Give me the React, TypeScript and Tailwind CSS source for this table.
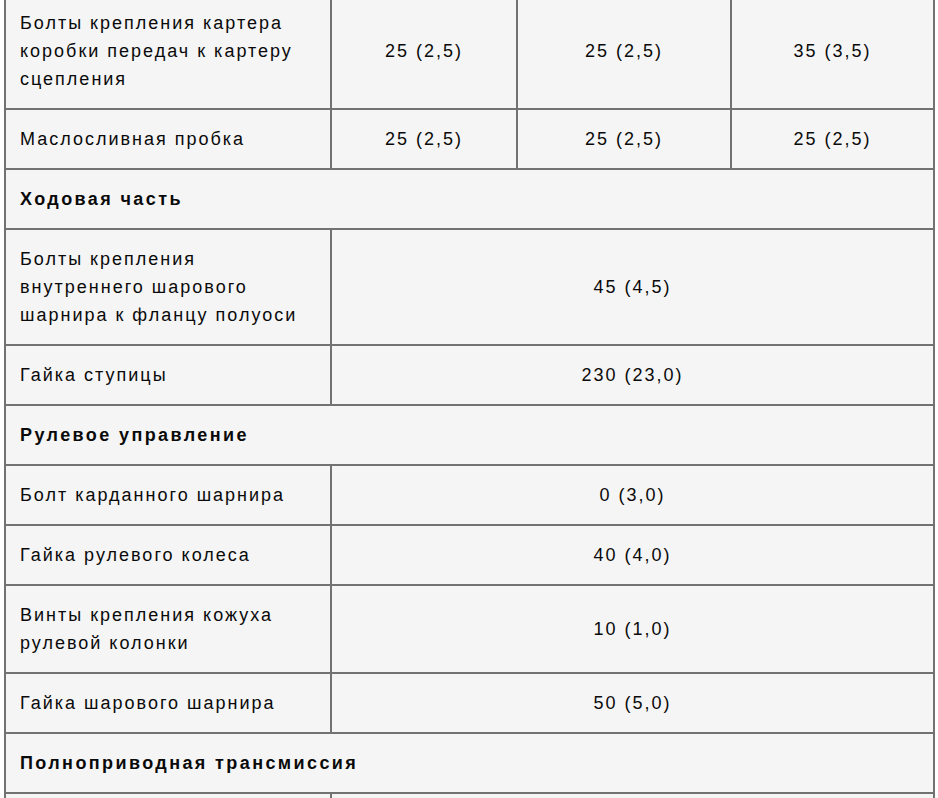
import React from 'react'

type Row =
  | { kind: 'section'; title: string }
  | { kind: 'split'; label: string[]; values: string[] }
  | { kind: 'single'; label: string[]; value: string }

const rows: Row[] = [
  { kind: 'split', label: ['Болты крепления картера', 'коробки передач к картеру', 'сцепления'], values: ['25 (2,5)', '25 (2,5)', '35 (3,5)'] },
  { kind: 'split', label: ['Маслосливная пробка'], values: ['25 (2,5)', '25 (2,5)', '25 (2,5)'] },
  { kind: 'section', title: 'Ходовая часть' },
  { kind: 'single', label: ['Болты крепления', 'внутреннего шарового', 'шарнира к фланцу полуоси'], value: '45 (4,5)' },
  { kind: 'single', label: ['Гайка ступицы'], value: '230 (23,0)' },
  { kind: 'section', title: 'Рулевое управление' },
  { kind: 'single', label: ['Болт карданного шарнира'], value: '0 (3,0)' },
  { kind: 'single', label: ['Гайка рулевого колеса'], value: '40 (4,0)' },
  { kind: 'single', label: ['Винты крепления кожуха', 'рулевой колонки'], value: '10 (1,0)' },
  { kind: 'single', label: ['Гайка шарового шарнира'], value: '50 (5,0)' },
  { kind: 'section', title: 'Полноприводная трансмиссия' },
  { kind: 'single', label: ['\u00a0'], value: '\u00a0' },
]

const cell = 'border-2 border-[#727272] bg-[#f5f5f5] px-[14px] py-[15px] align-middle'

export default function App() {
  return (
    <div className="min-h-screen bg-white overflow-hidden">
      <table
        className="ml-[4px] -mt-[8px] w-[929px] table-fixed border-collapse text-[18px] leading-[28px] tracking-[2px] text-[#0a0a0a]"
        style={{ fontFamily: '"Liberation Sans", Arial, sans-serif' }}
      >
        <colgroup>
          <col className="w-[326px]" />
          <col className="w-[186px]" />
          <col className="w-[214px]" />
          <col className="w-[203px]" />
        </colgroup>
        <tbody>
          {rows.map((r, i) => {
            if (r.kind === 'section') {
              return (
                <tr key={i}>
                  <td colSpan={4} className={`${cell} font-bold tracking-[2.4px]`}>{r.title}</td>
                </tr>
              )
            }
            const label = (
              <td className={cell}>
                {r.label.map((l, j) => <div key={j}>{l}</div>)}
              </td>
            )
            if (r.kind === 'split') {
              return (
                <tr key={i}>
                  {label}
                  {r.values.map((v, j) => (
                    <td key={j} className={`${cell} text-center`}>{v}</td>
                  ))}
                </tr>
              )
            }
            return (
              <tr key={i}>
                {label}
                <td colSpan={3} className={`${cell} text-center`}>{r.value}</td>
              </tr>
            )
          })}
        </tbody>
      </table>
    </div>
  )
}
